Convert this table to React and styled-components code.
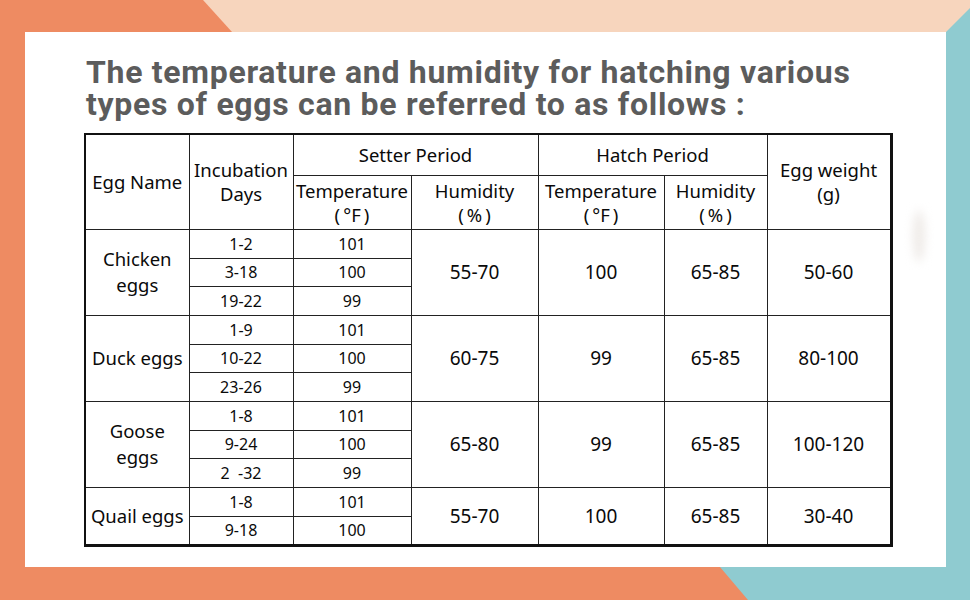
import React from "react";
import styled, { createGlobalStyle } from "styled-components";

const Global = createGlobalStyle`
  html, body { margin: 0; padding: 0; }
  body { width: 970px; height: 600px; overflow: hidden; background: #ee8b62; }
`;

const Page = styled.div`
  position: relative;
  width: 970px;
  height: 600px;
  box-sizing: border-box;
  padding: 32px 24px 33px 25px;
  background: #ee8b62;
`;

const Backdrop = styled.svg`
  position: absolute;
  inset: 0;
  width: 970px;
  height: 600px;
`;

const Card = styled.section`
  position: relative;
  height: 100%;
  box-sizing: border-box;
  background: #fff;
  padding: 24px 56px 0 59px;
  display: flex;
  flex-direction: column;
`;

const Title = styled.h1`
  margin: 0 0 0 2px;
  font-family: "Roboto", sans-serif;
  font-weight: 700;
  font-size: 32px;
  letter-spacing: 0.7px;
  line-height: 32px;
  color: #5c5c5c;
`;

const Smudge = styled.div`
  position: absolute;
  left: 888px;
  top: 178px;
  width: 12px;
  height: 52px;
  border-radius: 50%;
  background: #efebe8;
  filter: blur(5px);
`;

const Grid = styled.table`
  margin-top: 13px;
  width: 806px;
  border-collapse: collapse;
  border: 2px solid #111;
  border-right-width: 3px;
  border-bottom-width: 3px;
  table-layout: fixed;
  font-family: "Noto Sans", sans-serif;
  color: #0a0a0a;
`;

const Cell = styled.td`
  border: 1px solid #222;
  padding: 0;
  text-align: center;
  vertical-align: middle;
  font-size: ${(p) => p.$size || 19}px;
  line-height: ${(p) => p.$lh || 26}px;
  height: ${(p) => p.$h || 27.67}px;
`;

const HeadCell = styled(Cell).attrs({ as: "th" })`
  font-weight: 400;
  font-size: 18.5px;
  line-height: 24px;
`;

const groups = [
  { name: ["Chicken", "eggs"], rows: [["1-2", "101"], ["3-18", "100"], ["19-22", "99"]], sh: "55-70", ht: "100", hh: "65-85", w: "50-60" },
  { name: ["Duck eggs"], rows: [["1-9", "101"], ["10-22", "100"], ["23-26", "99"]], sh: "60-75", ht: "99", hh: "65-85", w: "80-100" },
  { name: ["Goose", "eggs"], rows: [["1-8", "101"], ["9-24", "100"], ["2\u00a0\u00a0-32", "99"]], sh: "65-80", ht: "99", hh: "65-85", w: "100-120" },
  { name: ["Quail eggs"], rows: [["1-8", "101"], ["9-18", "100"]], sh: "55-70", ht: "100", hh: "65-85", w: "30-40" },
];

const widths = [104, 104, 118, 127, 126, 103, 124];

export default function App() {
  return (
    <Page>
      <Global />
      <Backdrop viewBox="0 0 970 600">
        <polygon points="203,0 970,0 970,32 232,32" fill="#f7d5bd" />
        <polygon points="970,8 946,32 946,567 720,567 748,600 970,600" fill="#8fcbd0" />
      </Backdrop>
      <Card>
        <Smudge />
        <Title>
          The temperature and humidity for hatching various<br />
          types of eggs can be referred to as follows :
        </Title>
        <Grid>
          <colgroup>
            {widths.map((w, i) => (
              <col key={i} style={{ width: w }} />
            ))}
          </colgroup>
          <thead>
            <tr>
              <HeadCell rowSpan={2}>Egg Name</HeadCell>
              <HeadCell rowSpan={2}>Incubation<br />Days</HeadCell>
              <HeadCell colSpan={2} $h={40}>Setter Period</HeadCell>
              <HeadCell colSpan={2} $h={40}>Hatch Period</HeadCell>
              <HeadCell rowSpan={2}>Egg weight<br />(g)</HeadCell>
            </tr>
            <tr>
              <HeadCell $h={53}>Temperature<br />(&thinsp;°F&thinsp;)</HeadCell>
              <HeadCell $h={53}>Humidity<br />(&thinsp;%&thinsp;)</HeadCell>
              <HeadCell $h={53}>Temperature<br />(&thinsp;°F&thinsp;)</HeadCell>
              <HeadCell $h={53}>Humidity<br />(&thinsp;%&thinsp;)</HeadCell>
            </tr>
          </thead>
          <tbody>
            {groups.map((g) =>
              g.rows.map((r, i) => (
                <tr key={g.name[0] + i}>
                  {i === 0 && (
                    <Cell rowSpan={g.rows.length} $size={18.5}>
                      {g.name.map((n, k) => (
                        <React.Fragment key={k}>{k > 0 && <br />}{n}</React.Fragment>
                      ))}
                    </Cell>
                  )}
                  <Cell $size={16}>{r[0]}</Cell>
                  <Cell $size={16}>{r[1]}</Cell>
                  {i === 0 && (
                    <>
                      <Cell rowSpan={g.rows.length}>{g.sh}</Cell>
                      <Cell rowSpan={g.rows.length}>{g.ht}</Cell>
                      <Cell rowSpan={g.rows.length}>{g.hh}</Cell>
                      <Cell rowSpan={g.rows.length}>{g.w}</Cell>
                    </>
                  )}
                </tr>
              ))
            )}
          </tbody>
        </Grid>
      </Card>
    </Page>
  );
}
